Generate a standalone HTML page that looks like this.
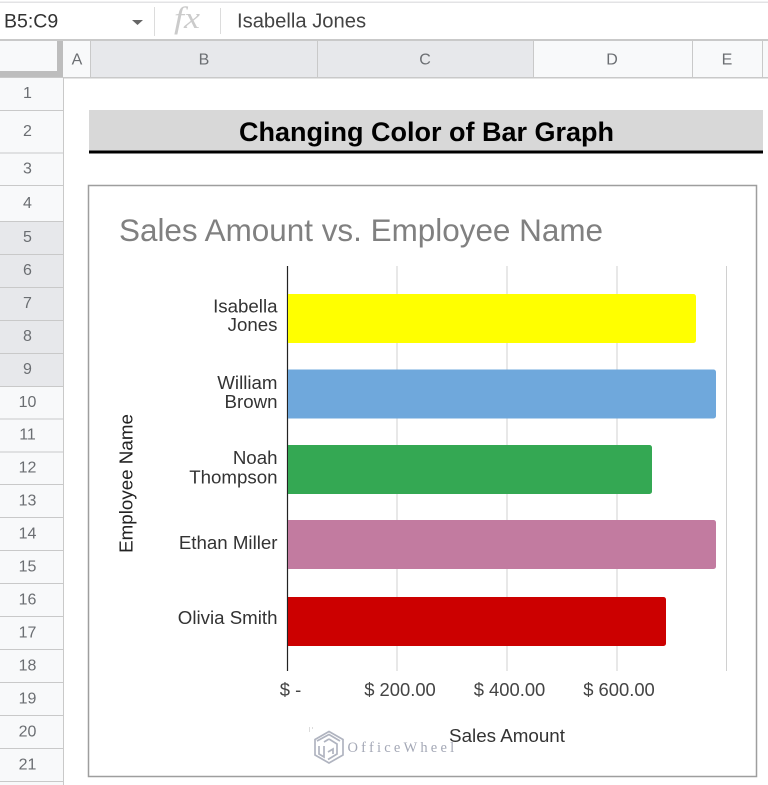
<!DOCTYPE html>
<html><head><meta charset="utf-8"><style>
html,body{margin:0;padding:0;background:#fff;width:768px;height:785px;overflow:hidden}
svg{display:block}
text{font-family:"Liberation Sans",sans-serif}
.h{font-size:16px;fill:#6b6e72;text-anchor:middle}
.r{font-size:16px;fill:#6b6e72;text-anchor:middle}
.l{font-size:18.700px;fill:#333;text-anchor:end}
.x{font-size:18.400px;fill:#444;text-anchor:middle}
</style></head><body>
<svg width="768" height="785" viewBox="0 0 768 785" xmlns="http://www.w3.org/2000/svg">
<rect width="768" height="785" fill="#fff"/>
<!-- formula bar -->
<rect x="0" y="1.500" width="768" height="1.500" fill="#e3e3e5"/>
<text x="4" y="27.500" font-size="19.500" fill="#333">B5:C9</text>
<path d="M132 20h11l-5.500 5z" fill="#666"/>
<rect x="154" y="7" width="1" height="29" fill="#dcdcdc"/>
<text x="174" y="28" font-size="31" textLength="26" lengthAdjust="spacingAndGlyphs" fill="#cbcbcb" style="font-family:'Liberation Serif',serif;font-style:italic">fx</text>
<rect x="220" y="8" width="1" height="26" fill="#dcdcdc"/>
<text x="237" y="27.500" font-size="20.200" fill="#444">Isabella Jones</text>
<!-- column headers -->
<rect x="0" y="40" width="768" height="38" fill="#f8f9fa"/>
<rect x="90" y="41" width="444" height="36" fill="#e7e8eb"/>
<rect x="0" y="39" width="768" height="2" fill="#c9c9c9"/>
<rect x="0" y="77" width="768" height="1.500" fill="#c9c9c9"/>
<rect x="57" y="41" width="6" height="36" fill="#bdbdbd"/>
<rect x="0" y="71" width="63" height="6" fill="#bdbdbd"/>
<rect x="90" y="41" width="1" height="36" fill="#c9c9c9"/>
<rect x="317" y="41" width="1" height="36" fill="#c9c9c9"/>
<rect x="533" y="41" width="1" height="36" fill="#c9c9c9"/>
<rect x="692" y="41" width="1" height="36" fill="#c9c9c9"/>
<rect x="762" y="41" width="1" height="36" fill="#c9c9c9"/>
<text class="h" x="77" y="64.500">A</text>
<text class="h" x="204" y="64.500">B</text>
<text class="h" x="425" y="64.500">C</text>
<text class="h" x="612" y="64.500">D</text>
<text class="h" x="727" y="64.500">E</text>
<!-- row headers -->
<rect x="0" y="78" width="63" height="707" fill="#f8f9fa"/>
<rect x="0" y="222" width="63" height="165" fill="#e7e8eb"/>
<rect x="63" y="78" width="1" height="707" fill="#c9c9c9"/>
<g fill="#c9c9c9">
<rect x="0" y="110" width="63" height="1"/><rect x="0" y="152.500" width="63" height="1"/><rect x="0" y="185" width="63" height="1"/><rect x="0" y="221" width="63" height="1"/><rect x="0" y="254" width="63" height="1"/><rect x="0" y="287" width="63" height="1"/><rect x="0" y="320" width="63" height="1"/><rect x="0" y="353" width="63" height="1"/><rect x="0" y="386" width="63" height="1"/><rect x="0" y="418.500" width="63" height="1"/><rect x="0" y="451.500" width="63" height="1"/><rect x="0" y="484" width="63" height="1"/><rect x="0" y="517" width="63" height="1"/><rect x="0" y="550" width="63" height="1"/><rect x="0" y="583" width="63" height="1"/><rect x="0" y="616" width="63" height="1"/><rect x="0" y="649" width="63" height="1"/><rect x="0" y="682" width="63" height="1"/><rect x="0" y="715" width="63" height="1"/><rect x="0" y="748" width="63" height="1"/><rect x="0" y="781" width="63" height="1"/>
</g>
<g>
<text class="r" x="27.500" y="98">1</text><text class="r" x="27.500" y="136">2</text><text class="r" x="27.500" y="173.500">3</text><text class="r" x="27.500" y="208">4</text><text class="r" x="27.500" y="242">5</text><text class="r" x="27.500" y="275">6</text><text class="r" x="27.500" y="308">7</text><text class="r" x="27.500" y="341">8</text><text class="r" x="27.500" y="374">9</text><text class="r" x="27.500" y="407">10</text><text class="r" x="27.500" y="439.500">11</text><text class="r" x="27.500" y="472.500">12</text><text class="r" x="27.500" y="505.500">13</text><text class="r" x="27.500" y="538.500">14</text><text class="r" x="27.500" y="571.500">15</text><text class="r" x="27.500" y="604.500">16</text><text class="r" x="27.500" y="637.500">17</text><text class="r" x="27.500" y="670.500">18</text><text class="r" x="27.500" y="703.500">19</text><text class="r" x="27.500" y="736.500">20</text><text class="r" x="27.500" y="769.500">21</text>
</g>
<!-- title cell -->
<rect x="89" y="110" width="674" height="41" fill="#d8d8d8"/>
<rect x="89" y="150.500" width="674" height="3" fill="#000"/>
<text x="426.500" y="141" font-size="27" font-weight="700" fill="#000" text-anchor="middle">Changing Color of Bar Graph</text>
<!-- chart -->
<rect x="88.500" y="185.500" width="668" height="591" fill="#fff" stroke="#9e9e9e" stroke-width="1.500"/>
<text x="119" y="241" font-size="31.450" fill="#808080">Sales Amount vs. Employee Name</text>
<g fill="#d0d0d0">
<rect x="396.500" y="266" width="1" height="405"/>
<rect x="506.500" y="266" width="1" height="405"/>
<rect x="616.500" y="266" width="1" height="405"/>
<rect x="726" y="266" width="1" height="405"/>
</g>
<path d="M287.500 266V671" stroke="#222" stroke-width="1.200"/>
<path d="M288 294h405.500a2.500 2.500 0 0 1 2.500 2.500v44a2.500 2.500 0 0 1-2.500 2.500H288z" fill="#ffff00"/>
<path d="M288 369.500h425.500a2.500 2.500 0 0 1 2.500 2.500v44a2.500 2.500 0 0 1-2.500 2.500H288z" fill="#6fa8dc"/>
<path d="M288 445h361.500a2.500 2.500 0 0 1 2.500 2.500v44a2.500 2.500 0 0 1-2.500 2.500H288z" fill="#34a853"/>
<path d="M288 520h425.500a2.500 2.500 0 0 1 2.500 2.500v44a2.500 2.500 0 0 1-2.500 2.500H288z" fill="#c27ba0"/>
<path d="M288 597h375.500a2.500 2.500 0 0 1 2.500 2.500v44a2.500 2.500 0 0 1-2.500 2.500H288z" fill="#cc0000"/>
<text class="l" x="277.500" y="312.500">Isabella</text>
<text class="l" x="277.500" y="331">Jones</text>
<text class="l" x="277.500" y="389">William</text>
<text class="l" x="277.500" y="408">Brown</text>
<text class="l" x="277.500" y="464">Noah</text>
<text class="l" x="277.500" y="483.500">Thompson</text>
<text class="l" x="277.500" y="549">Ethan Miller</text>
<text class="l" x="277.500" y="624">Olivia Smith</text>
<text class="x" x="290.500" y="696">$ -</text>
<text class="x" x="400" y="696">$ 200.00</text>
<text class="x" x="509.500" y="696">$ 400.00</text>
<text class="x" x="619" y="696">$ 600.00</text>
<!-- watermark -->
<path d="M309.500 727v5M312.500 727v2" stroke="#dcdcdc" stroke-width="1"/>
<g fill="none" stroke="#b0b4c0" stroke-width="1.700">
<path d="M329 731.500l14 8v15.500l-14 8-14-8v-15.500z"/>
<path d="M317 741l12-6.500 11 6.500"/>
<path d="M319 746v8l5 3v-11"/>
<path d="M329 739l-5 3M329 739l8 5v10l-9 5.500"/>
<path d="M328 752l5-3v5"/>
</g>
<text x="347.500" y="752" font-size="14.500" letter-spacing="3.200" fill="#a4a8b6" style="font-family:'Liberation Serif',serif">OfficeWheel</text>
<text x="507" y="742" font-size="18.800" fill="#333" text-anchor="middle">Sales Amount</text>
<text transform="translate(132.500 483.500) rotate(-90)" font-size="18.800" fill="#222" text-anchor="middle">Employee Name</text>
</svg>
</body></html>
